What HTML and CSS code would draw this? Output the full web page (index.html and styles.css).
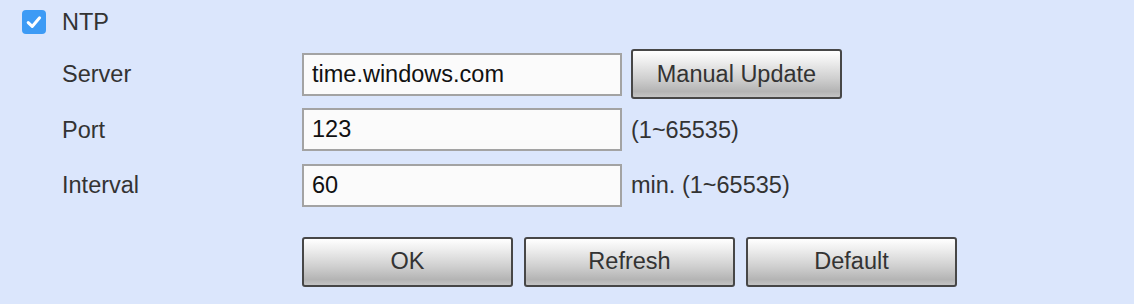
FILE: index.html
```html
<!DOCTYPE html>
<html>
<head>
<meta charset="utf-8">
<link rel="stylesheet" href="styles.css">
</head>
<body>
<div class="panel">
  <div class="check-row">
    <span class="checkbox">
      <svg width="24" height="24" viewBox="0 0 24 24">
        <rect x="0" y="0" width="24" height="24" rx="4" fill="#3d9bf5"/>
        <path d="M6.2 12.6 L10.2 16.4 L17.6 7.8" fill="none" stroke="#ffffff" stroke-width="3" stroke-linecap="round" stroke-linejoin="round"/>
      </svg>
    </span>
    <span class="check-label">NTP</span>
  </div>
  <div class="form">
    <div class="label">Server</div>
    <input class="field" type="text" value="time.windows.com">
    <div class="extra"><button class="btn">Manual Update</button></div>

    <div class="label">Port</div>
    <input class="field" type="text" value="123">
    <div class="extra"><span class="hint">(1~65535)</span></div>

    <div class="label">Interval</div>
    <input class="field" type="text" value="60">
    <div class="extra"><span class="hint">min. (1~65535)</span></div>
  </div>
  <div class="actions">
    <button class="btn">OK</button>
    <button class="btn">Refresh</button>
    <button class="btn">Default</button>
  </div>
</div>
</body>
</html>
```

FILE: styles.css
```css
html, body {
  margin: 0;
  padding: 0;
  background: #dbe6fc;
  width: 1134px;
  height: 304px;
  overflow: hidden;
}

.panel {
  padding: 10px 0 0 22px;
  font-family: "Liberation Sans", Arial, sans-serif;
  font-size: 23.5px;
  color: #333333;
}

.check-row {
  display: flex;
  align-items: center;
  height: 24px;
}

.checkbox {
  display: block;
  width: 24px;
  height: 24px;
}

.checkbox svg {
  display: block;
}

.check-label {
  margin-left: 16px;
  line-height: 24px;
}

.form {
  margin-top: 15px;
  margin-left: 40px;
  display: grid;
  grid-template-columns: 240px 320px auto;
  grid-auto-rows: 50px;
  row-gap: 5.5px;
  align-items: center;
}

.label {
  line-height: 24px;
}

.field {
  box-sizing: border-box;
  width: 320px;
  height: 43px;
  margin: 0;
  padding: 0 8px;
  border: 2px solid #a3a3a3;
  border-radius: 0;
  background: #fbfbfb;
  font-family: "Liberation Sans", Arial, sans-serif;
  font-size: 23.5px;
  color: #111111;
  outline: none;
}

.extra {
  padding-left: 9px;
  display: flex;
  align-items: center;
}

.hint {
  line-height: 24px;
}

.btn {
  box-sizing: border-box;
  width: 211px;
  height: 50px;
  margin: 0;
  padding: 0;
  border: 2px solid #474747;
  border-radius: 3px;
  background: linear-gradient(#ffffff 0%, #ececec 25%, #cfcfcf 60%, #b4b4b4 88%, #c4c4c4 100%);
  font-family: "Liberation Sans", Arial, sans-serif;
  font-size: 23.5px;
  color: #333333;
  cursor: default;
}

.actions {
  margin-top: 26.5px;
  margin-left: 280px;
  display: flex;
  gap: 11px;
}
```
